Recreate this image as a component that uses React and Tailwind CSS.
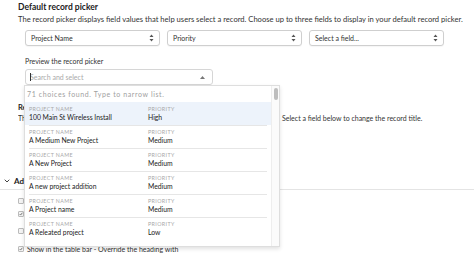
import React from 'react';

const choices = [
  { name: '100 Main St Wireless Install', priority: 'High' },
  { name: 'A Medium New Project', priority: 'Medium' },
  { name: 'A New Project', priority: 'Medium' },
  { name: 'A new project addition', priority: 'Medium' },
  { name: 'A Project name', priority: 'Medium' },
  { name: 'A Releated project', priority: 'Low' },
];

const UpDown = () => (
  <svg width="5" height="8" viewBox="0 0 5 8" className="shrink-0">
    <path d="M2.5 0.5 L4.5 3 H0.5 Z M2.5 7.5 L4.5 5 H0.5 Z" fill="#555" />
  </svg>
);

const FieldSelect = ({ label }) => (
  <div className="w-[135px] h-[16px] border border-[#cfcfcf] rounded-[3px] flex items-center justify-between pl-[5px] pr-[5px] bg-white shadow-[0_1px_1px_rgba(0,0,0,0.04)]">
    <span className="text-[7px] text-[#333]">{label}</span>
    <UpDown />
  </div>
);

const Check = ({ checked }) => (
  <span className="w-[6px] h-[6px] border border-[#bbb] rounded-[1px] bg-[#f4f4f4] flex items-center justify-center shrink-0">
    {checked && (
      <svg width="6" height="6" viewBox="0 0 6 6">
        <path d="M1 3.2 L2.4 4.6 L5 1.2" stroke="#444" strokeWidth="1" fill="none" />
      </svg>
    )}
  </span>
);

export default function App() {
  return (
    <div className="relative w-[474px] h-[258px] overflow-hidden bg-white text-[#333] font-['Lato','Liberation_Sans',sans-serif]">
      <div className="pl-[18px] pt-[2px]">
        <h3 className="text-[8.5px] leading-[10px] font-bold text-[#222]">Default record picker</h3>
        <p className="text-[7.6px] leading-[10px] mt-[2px] whitespace-nowrap">
          The record picker displays field values that help users select a record. Choose up to three fields to display in your default record picker.
        </p>

        <div className="flex gap-[7px] pl-[7px] mt-[6px]">
          <FieldSelect label="Project Name" />
          <FieldSelect label="Priority" />
          <FieldSelect label="Select a field..." />
        </div>

        <div className="pl-[7px] mt-[10px]">
          <p className="text-[7px] leading-[10px]">Preview the record picker</p>
          <div className="relative mt-[3px] w-[188px] h-[16px] border border-[#d6d6d6] rounded-[3px] flex items-center justify-between pl-[4px] pr-[7px]">
            <span className="relative text-[7px] text-[#aaa]">
              <span className="absolute left-0 top-[1px] w-px h-[8px] bg-[#333]" />
              Search and select
            </span>
            <svg width="5" height="3" viewBox="0 0 5 3">
              <path d="M2.5 0 L5 3 H0 Z" fill="#777" />
            </svg>

            {/* open dropdown */}
            <div className="absolute left-[-2px] top-[15px] z-10 w-[256px] h-[162px] bg-white border border-[#dedede] shadow-[0_2px_4px_rgba(0,0,0,0.12)] flex">
              <div className="flex-1 flex flex-col">
                <div className="h-[16px] flex items-center pl-[2px] text-[7px] tracking-[0.6px] text-[#a0a0a0]">
                  71 choices found. Type to narrow list.
                </div>
                {choices.map((c, i) => (
                  <div
                    key={c.name}
                    className={`h-[23px] flex flex-col justify-center ${i === 0 ? 'bg-[#edf3fb]' : ''}`}
                  >
                    <div className={`mx-[4px] h-full flex items-center ${i > 0 ? 'border-t border-[#e6e6e6]' : ''}`}>
                      <div className="w-[119px]">
                        <div className="text-[5.3px] leading-[7px] tracking-[0.4px] text-[#a8a8a8]">PROJECT NAME</div>
                        <div className="text-[6.8px] leading-[9px] text-[#222]">{c.name}</div>
                      </div>
                      <div>
                        <div className="text-[5.3px] leading-[7px] tracking-[0.4px] text-[#a8a8a8]">PRIORITY</div>
                        <div className="text-[6.8px] leading-[9px] text-[#222]">{c.priority}</div>
                      </div>
                    </div>
                  </div>
                ))}
              </div>
              <div className="w-[8px] border-l border-[#eee] bg-[#fbfbfb] pt-[2px] flex justify-center">
                <div className="w-[4px] h-[12px] rounded-[2px] bg-[#bdbdbd]" />
              </div>
            </div>
          </div>
        </div>

        <h3 className="mt-[18px] text-[7.5px] leading-[10px] font-bold text-[#222]">Record title</h3>
        <p className="text-[7px] leading-[10px] whitespace-nowrap flex">
          <span className="inline-block w-[264px] overflow-hidden">This is the title displayed on records and in lists.</span>
          <span>Select a field below to change the record title.</span>
        </p>
      </div>

      <div className="mt-[53px] border-b border-[#e4e4e4] pb-[3px] flex items-center gap-[4px] pl-[4px]">
        <svg width="6" height="4" viewBox="0 0 6 4">
          <path d="M0.7 0.7 L3 3 L5.3 0.7" stroke="#444" strokeWidth="1" fill="none" />
        </svg>
        <span className="text-[8px] leading-[10px] font-bold text-[#222]">Advanced settings</span>
      </div>

      <div className="pl-[18px] text-[7px] leading-[10px]">
        <div className="mt-[6px] flex items-center gap-[3px]"><Check /><span>Allow users to create records</span></div>
        <div className="mt-[3px] flex items-center gap-[3px]"><Check checked /><span>Show record count</span></div>
        <div className="mt-[7px] flex items-center gap-[3px]"><Check /><span>Hide empty fields</span></div>
        <div className="mt-[8px] flex items-center gap-[3px]"><Check checked /><span>Show in the table bar - Override the heading with</span></div>
      </div>
    </div>
  );
}
